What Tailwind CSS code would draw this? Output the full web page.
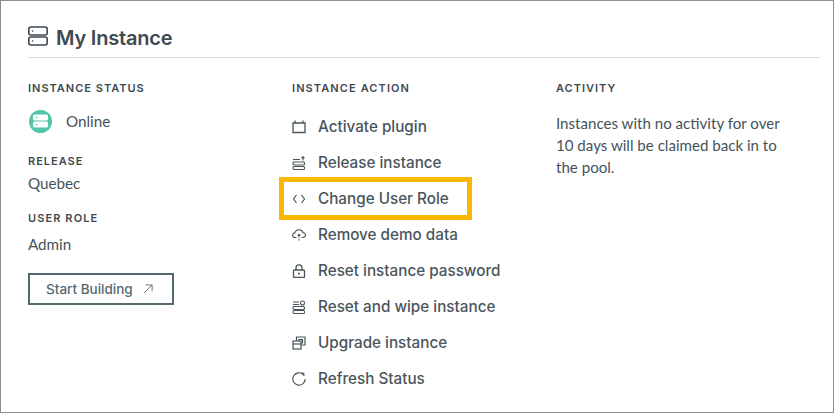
<!DOCTYPE html>
<html lang="en">
  <head>
    <meta charset="UTF-8" />
    <title>My Instance</title>
    <script src="https://cdn.jsdelivr.net/npm/@tailwindcss/browser@4"></script>
  </head>
  <body class="bg-white">
    <div class="w-[834px] h-[414px] overflow-hidden">
      <div class="w-[834px] h-[413px] border border-[#8c8c8c] px-[27px] font-['Lato',sans-serif] text-[#44535a]">
        <!-- header -->
        <div class="h-[57px] pt-[23px] border-b border-[#d9d9d9] w-[792px] flex items-start gap-2">
          <svg class="w-5 h-5 mt-[2px] text-[#3f4a50]" viewBox="0 0 20 20" fill="none" stroke="currentColor" stroke-width="1.6">
            <rect x="0.8" y="1" width="18.4" height="8" rx="2" />
            <rect x="0.8" y="11" width="18.4" height="8" rx="2" />
            <path d="M4 5h1.2M4 15h1.2" />
          </svg>
          <h1 class="font-['Inter',sans-serif] font-semibold text-[20px] leading-[28px] tracking-[-0.2px] text-[#3f4a50]">My Instance</h1>
        </div>

        <div class="grid grid-cols-[264px_264px_1fr] pt-[23px]">
          <!-- status column -->
          <div>
            <h2 class="font-['Inter',sans-serif] font-semibold text-[11px] leading-[14px] tracking-[1px] text-[#3f4a50]">INSTANCE STATUS</h2>
            <div class="flex items-center gap-[14px] ml-px mt-[14px] h-[24px]">
              <span class="w-[23px] h-[23px] rounded-full bg-[#52c4a7] flex items-center justify-center">
                <svg class="w-[15px] h-[14px]" viewBox="0 0 15 14" fill="#fff">
                  <rect x="0" y="0.5" width="15" height="6" rx="1.5" />
                  <rect x="0" y="7.5" width="15" height="6" rx="1.5" />
                  <path d="M3 3h1.6v1H3zM3 10h1.6v1H3z" fill="#52c4a7" />
                </svg>
              </span>
              <span class="text-[15.200px] leading-[20px]">Online</span>
            </div>
            <h2 class="mt-[21px] font-['Inter',sans-serif] font-semibold text-[11px] leading-[14px] tracking-[1px] text-[#3f4a50]">RELEASE</h2>
            <p class="mt-[5px] text-[15.200px] leading-[20px]">Quebec</p>
            <h2 class="mt-[18px] font-['Inter',sans-serif] font-semibold text-[11px] leading-[14px] tracking-[1.100px] text-[#3f4a50]">USER ROLE</h2>
            <p class="mt-[9px] text-[15.200px] leading-[20px]">Admin</p>
            <a class="mt-[19px] w-[146px] h-[32px] border-2 border-[#566a70] flex items-center gap-[10px] pl-4 font-['Inter',sans-serif] font-medium text-[13.500px] text-[#566a70]">
              Start Building
              <svg class="w-[10px] h-[10px]" viewBox="0 0 11 11" fill="none" stroke="currentColor" stroke-width="1">
                <path d="M1 10 10 1M3 1h7v7" />
              </svg>
            </a>
          </div>

          <!-- actions column -->
          <div>
            <h2 class="font-['Inter',sans-serif] font-semibold text-[11px] leading-[14px] tracking-[1.100px] text-[#3f4a50]">INSTANCE ACTION</h2>
            <ul class="mt-[14px] font-['Inter',sans-serif] font-medium text-[15.250px] text-[#4a555b]">
              <li class="h-9 flex items-center gap-3">
                <svg class="w-[14px] h-[14px]" viewBox="0 0 14 14" fill="none" stroke="currentColor" stroke-width="1.3">
                  <path d="M3 .5V3M11 .5V3M1 3h12v9.500H1z" />
                </svg>
                Activate plugin
              </li>
              <li class="h-9 flex items-center gap-3">
                <svg class="w-[14px] h-[14px]" viewBox="0 0 14 14" fill="none" stroke="currentColor" stroke-width="1.1">
                  <path d="M1 3.500h7" />
                  <rect x="1" y="6" width="11.500" height="3" rx="1" />
                  <rect x="1" y="10.500" width="11.500" height="3" rx="1" />
                  <path d="M11 4.500V.8M9.500 2.200 11 .8l1.500 1.400" />
                </svg>
                Release instance
              </li>
              <li class="relative h-9 flex items-center gap-3">
                <svg class="w-[14px] h-[14px]" viewBox="0 0 14 14" fill="none" stroke="currentColor" stroke-width="1.200">
                  <path d="M4.500 3 1.500 7l3 4M9.500 3l3 4-3 4" />
                </svg>
                Change User Role
                <span class="absolute left-[-13px] top-[-4px] w-[193px] h-[43px] border-[5px] border-[#fbb800]"></span>
              </li>
              <li class="h-9 flex items-center gap-3">
                <svg class="w-[14px] h-[14px]" viewBox="0 0 14 14" fill="none" stroke="currentColor" stroke-width="1.100">
                  <path d="M4.500 9.500H3a2.300 2.300 0 0 1-.2-4.600A4.300 4.300 0 0 1 11 4.700a2.400 2.400 0 0 1 0 4.800H9.500M5.700 7.700 7 6.400l1.300 1.300M7 6.400v3M7 10.800v1.700" />
                </svg>
                Remove demo data
              </li>
              <li class="h-9 flex items-center gap-3">
                <svg class="w-[14px] h-[14px]" viewBox="0 0 14 14" fill="none" stroke="currentColor" stroke-width="1.300">
                  <rect x="1.500" y="6" width="11" height="7.500" rx="1" />
                  <path d="M4 6V3.800a3 3 0 0 1 6 0V6" />
                  <path d="M7 8.700v1.700" stroke-width="1.800" />
                </svg>
                Reset instance password
              </li>
              <li class="h-9 flex items-center gap-3">
                <svg class="w-[14px] h-[14px]" viewBox="0 0 14 14" fill="none" stroke="currentColor" stroke-width="1.100">
                  <path d="M1 2h6M1 4.500h6" />
                  <rect x="1" y="6.500" width="11.500" height="3" rx="1" />
                  <rect x="1" y="10.500" width="11.500" height="3" rx="1" />
                  <circle cx="10.500" cy="3" r="2" />
                </svg>
                Reset and wipe instance
              </li>
              <li class="h-9 flex items-center gap-3">
                <svg class="w-[14px] h-[14px]" viewBox="0 0 14 14" fill="none" stroke="currentColor" stroke-width="1.200">
                  <path d="M4.500 5V1h8.500v8H9" />
                  <path d="M7 5V3.500h3.500V7H9" />
                  <rect x="1" y="5" width="8" height="8" />
                  <path d="M1 8h8" />
                </svg>
                Upgrade instance
              </li>
              <li class="h-9 flex items-center gap-3">
                <svg class="w-[14px] h-[14px]" viewBox="0 0 14 14" fill="none" stroke="currentColor" stroke-width="1.200">
                  <path d="M11.300 2.500A6.200 6.200 0 1 0 13.200 7" />
                  <path d="M9.300 1 11.800 1.300V4" />
                </svg>
                Refresh Status
              </li>
            </ul>
          </div>

          <!-- activity column -->
          <div>
            <h2 class="font-['Inter',sans-serif] font-semibold text-[11px] leading-[14px] tracking-[1px] text-[#3f4a50]">ACTIVITY</h2>
            <p class="mt-[17px] w-[240px] text-[15.100px] leading-[22px]">Instances with no activity for over 10 days will be claimed back in to the pool.</p>
          </div>
        </div>
      </div>
    </div>
  </body>
</html>
